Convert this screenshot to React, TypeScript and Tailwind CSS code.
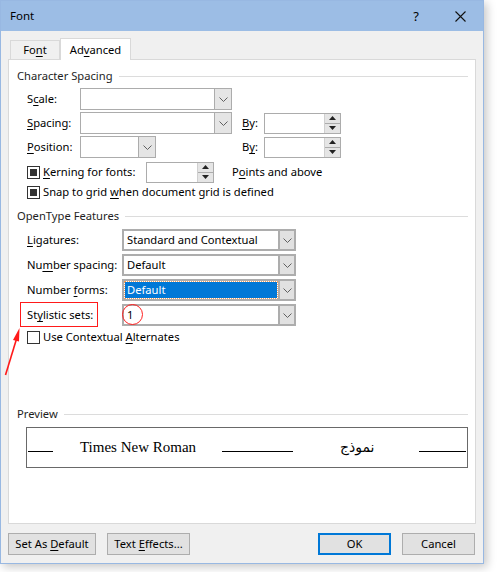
import React from "react";

const U = ({ c }: { c: string }) => <span className="underline underline-offset-[2px]">{c}</span>;

const Chevron = () => (
  <svg width="9" height="5" viewBox="0 0 9 5" className="block">
    <path d="M0.5 0.5 L4.5 4.5 L8.5 0.5" fill="none" stroke="#606060" strokeWidth="1" />
  </svg>
);

const ThinCombo = ({ w }: { w: string }) => (
  <div className={`${w} h-[22px] border border-[#acacac] bg-white flex justify-end shrink-0`}>
    <div className="w-[17px] h-full bg-[#e5e5e5] border-l border-[#acacac] flex items-center justify-center">
      <Chevron />
    </div>
  </div>
);

const Spinner = ({ w }: { w: string }) => (
  <div className={`${w} h-[21px] border border-[#acacac] bg-white flex justify-end shrink-0`}>
    <div className="w-[16px] h-full flex flex-col border-l border-[#d0d0d0]">
      <div className="flex-1 bg-[#e5e5e5] flex items-center justify-center border-b border-[#acacac]">
        <svg width="7" height="4" viewBox="0 0 7 4"><path d="M0 4 L3.5 0 L7 4 Z" fill="#222" /></svg>
      </div>
      <div className="flex-1 bg-[#e5e5e5] flex items-center justify-center">
        <svg width="7" height="4" viewBox="0 0 7 4"><path d="M0 0 L3.5 4 L7 0 Z" fill="#222" /></svg>
      </div>
    </div>
  </div>
);

const OTCombo = ({ children, selected }: { children?: React.ReactNode; selected?: boolean }) => (
  <div className="w-[174px] h-[22px] border-2 border-[#adadad] bg-white flex relative shrink-0">
    <div className="flex-1 flex items-center px-[1px]">
      {selected ? (
        <div className="w-full h-[16px] bg-[#0078d7] outline outline-1 outline-dotted outline-[#f0a060] text-white flex items-center pl-[2px]">
          {children}
        </div>
      ) : (
        <div className="pl-[2px] whitespace-nowrap">{children}</div>
      )}
    </div>
    <div className="w-[16px] h-full bg-[#e1e1e1] border-l-2 border-[#adadad] flex items-center justify-center">
      <Chevron />
    </div>
  </div>
);

const Check = ({ filled }: { filled?: boolean }) => (
  <div className="w-[13px] h-[13px] border border-[#333] bg-white flex items-center justify-center shrink-0">
    {filled && <div className="w-[7px] h-[7px] bg-[#333]" />}
  </div>
);

const Heading = ({ children, mt }: { children: React.ReactNode; mt: string }) => (
  <div className={`${mt} h-[20px] flex items-center pl-[8px] pr-[7px]`}>
    <span className="text-[#1e1e1e] whitespace-nowrap">{children}</span>
    <div className="flex-1 h-px bg-[#dcdcdc] ml-[6px]" />
  </div>
);

const Button = ({ children, w, primary }: { children: React.ReactNode; w: string; primary?: boolean }) => (
  <div
    className={`${w} h-[22px] bg-[#e1e1e1] flex items-center justify-center ${
      primary ? "border-2 border-[#0078d7]" : "border border-[#adadad]"
    }`}
  >
    <span className="whitespace-nowrap">{children}</span>
  </div>
);

export default function App() {
  return (
    <div className="w-[497px] h-[572px] bg-white relative font-['Noto_Sans',sans-serif] text-[11.2px] leading-none text-black overflow-hidden">
      <div className="w-[484px] h-[564px] border border-[#98b8e2] bg-[#f0f0f0] flex flex-col shadow-[3px_3px_9px_rgba(0,0,0,0.22)]">
        {/* title bar */}
        <div className="h-[30px] bg-[#9cbde5] flex items-center pl-[9px] pr-[17px] shrink-0">
          <span className="text-[11.5px]">Font</span>
          <span className="ml-auto text-[13px] mr-[36px]">?</span>
          <svg width="11" height="11" viewBox="0 0 11 11">
            <path d="M0.5 0.5 L10.5 10.5 M10.5 0.5 L0.5 10.5" stroke="#111" strokeWidth="1.1" />
          </svg>
        </div>

        <div className="px-[7px] flex flex-col">
          {/* tabs */}
          <div className="mt-[7px] h-[21px] flex items-end pl-[2px]">
            <div className="w-[50px] h-[19px] border border-b-0 border-[#d9d9d9] bg-[#f0f0f0] flex items-center justify-center">
              <span>Fo<U c="n" />t</span>
            </div>
            <div className="w-[71px] h-[22px] -mb-px relative z-10 border border-b-0 border-[#d9d9d9] bg-white flex items-center justify-center">
              <span>Ad<U c="v" />anced</span>
            </div>
          </div>

          {/* panel */}
          <div className="w-[468px] h-[465px] border border-[#d9d9d9] bg-white flex flex-col">
            <Heading mt="mt-[6px]">Character Spacing</Heading>

            <div className="mt-[2px] h-[22px] pl-[18px] flex items-center whitespace-nowrap">
              <span className="w-[53px]">S<U c="c" />ale:</span>
              <ThinCombo w="w-[152px]" />
            </div>

            <div className="mt-[2px] h-[22px] pl-[18px] flex items-center whitespace-nowrap">
              <span className="w-[53px]"><U c="S" />pacing:</span>
              <ThinCombo w="w-[152px]" />
              <span className="ml-[10px] w-[22px]"><U c="B" />y:</span>
              <Spinner w="w-[77px]" />
            </div>

            <div className="mt-[2px] h-[22px] pl-[18px] flex items-center whitespace-nowrap">
              <span className="w-[53px]"><U c="P" />osition:</span>
              <ThinCombo w="w-[76px]" />
              <span className="ml-[86px] w-[22px]">B<U c="y" />:</span>
              <Spinner w="w-[77px]" />
            </div>

            <div className="mt-[4px] h-[20px] pl-[18px] flex items-center whitespace-nowrap">
              <Check filled />
              <span className="ml-[3px] w-[103px]"><U c="K" />erning for fonts:</span>
              <Spinner w="w-[68px]" />
              <span className="ml-[18px]">P<U c="o" />ints and above</span>
            </div>

            <div className="mt-[1px] h-[18px] pl-[18px] flex items-center whitespace-nowrap">
              <Check filled />
              <span className="ml-[3px]">Snap to grid <U c="w" />hen document grid is defined</span>
            </div>

            <Heading mt="mt-[5px]">OpenType Features</Heading>

            <div className="mt-[3px] h-[22px] pl-[18px] flex items-center whitespace-nowrap">
              <span className="w-[95px]"><U c="L" />igatures:</span>
              <OTCombo>Standard and Contextual</OTCombo>
            </div>

            <div className="mt-[3px] h-[22px] pl-[18px] flex items-center whitespace-nowrap">
              <span className="w-[95px]">Nu<U c="m" />ber spacing:</span>
              <OTCombo>Default</OTCombo>
            </div>

            <div className="mt-[3px] h-[22px] pl-[18px] flex items-center whitespace-nowrap">
              <span className="w-[95px]">Number <U c="f" />orms:</span>
              <OTCombo selected>Default</OTCombo>
            </div>

            <div className="mt-[3px] h-[22px] pl-[18px] flex items-center whitespace-nowrap">
              <span className="w-[95px] relative">
                St<U c="y" />listic sets:
                <span className="absolute -left-[7px] -top-[7px] w-[78px] h-[25px] border border-[#ff1a1a]" />
              </span>
              <div className="relative">
                <OTCombo>1</OTCombo>
                <span className="absolute left-0 top-0 w-[21px] h-[21px] rounded-full border border-[#ff2020]" />
              </div>
            </div>

            <div className="mt-[2px] h-[18px] pl-[18px] flex items-center whitespace-nowrap">
              <Check />
              <span className="ml-[3px]">Use Contextual <U c="A" />lternates</span>
            </div>

            <Heading mt="mt-[58px]">Preview</Heading>

            <div className="mt-[3px] ml-[17px] w-[442px] h-[41px] border border-[#696969] bg-white">
              <div className="pt-[12px] flex items-baseline leading-none whitespace-nowrap">
                <div className="ml-[1px] w-[25px] h-px bg-black shrink-0" />
                <span className="ml-[26px] w-[118px] text-center text-[15px] font-['Liberation_Serif',serif] shrink-0">Times New Roman</span>
                <div className="ml-[25px] w-[71px] h-px bg-black shrink-0" />
                <span className="ml-[47px] w-[34px] text-center text-[14px] font-['DejaVu_Sans','Noto_Sans',sans-serif] shrink-0">نموذج</span>
                <div className="ml-[45px] w-[47px] h-px bg-black shrink-0" />
              </div>
            </div>
          </div>

          {/* buttons */}
          <div className="mt-[9px] h-[22px] flex items-center">
            <Button w="w-[88px]">Set As <U c="D" />efault</Button>
            <div className="ml-[11px]">
              <Button w="w-[83px]">Text <U c="E" />ffects...</Button>
            </div>
            <div className="ml-auto mr-[1px] flex gap-[11px]">
              <Button w="w-[73px]" primary>OK</Button>
              <Button w="w-[73px]">Cancel</Button>
            </div>
          </div>
        </div>
      </div>

      {/* red arrow annotation */}
      <svg className="absolute left-0 top-0" width="40" height="400" viewBox="0 0 40 400">
        <path d="M5.5 375 L16.5 339" stroke="#ff1a1a" strokeWidth="1.6" fill="none" />
        <path d="M19.5 328 L13 340 L19 341.5 Z" fill="#ff1a1a" />
      </svg>
    </div>
  );
}
